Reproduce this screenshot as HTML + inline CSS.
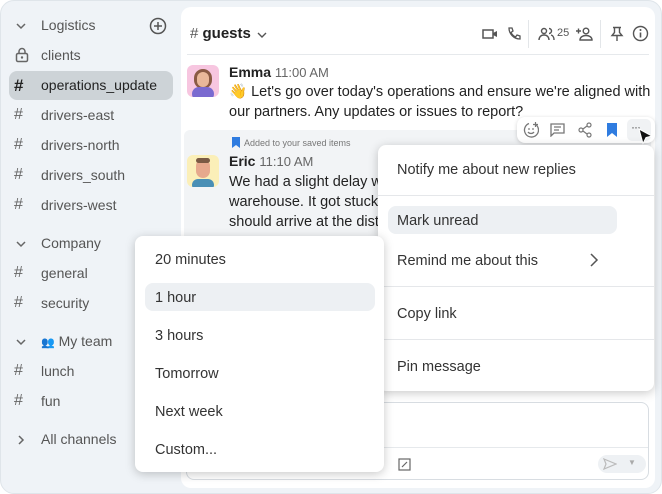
<!DOCTYPE html>
<html><head><meta charset="utf-8"><style>
*{box-sizing:border-box;margin:0;padding:0}
body{width:662px;height:494px;overflow:hidden;font-family:"Liberation Sans",sans-serif;background:#fff;position:relative;color:#222}
.frame{position:absolute;left:0;top:0;width:662px;height:494px;background:#eff3f7;border:1px solid #dfe5ea;border-radius:14px}
.main{position:absolute;left:181px;top:7px;width:474px;height:481px;background:#fff;border-radius:10px}
.abs{position:absolute;white-space:nowrap}
.sb{font-size:14px;color:#555}
.ic{color:#666;font-size:16px}
.menu{position:absolute;background:#fff;border-radius:8px;box-shadow:0 2px 10px rgba(0,0,0,.22)}
.mi{position:absolute;font-size:14.5px;color:#333;white-space:nowrap}
.hl{position:absolute;background:#edf0f3;border-radius:8px}
.div{position:absolute;height:1px;background:#e5e7ea}
</style></head><body>
<div class="frame"></div>
<!-- sidebar -->
<div class="hl" style="left:9px;top:71px;width:164px;height:29px;background:#cdd3d7"></div>
<svg class="abs" style="left:15px;top:20px" width="12" height="12" viewBox="0 0 12 12"><path d="M2 4l4 4 4-4" fill="none" stroke="#666" stroke-width="1.5"/></svg>
<div class="abs sb" style="left:41px;top:17px">Logistics</div>
<svg class="abs" style="left:149px;top:17px" width="18" height="18" viewBox="0 0 18 18"><circle cx="9" cy="9" r="7.5" fill="none" stroke="#555" stroke-width="1.5"/><path d="M9 5v8M5 9h8" stroke="#555" stroke-width="1.5"/></svg>
<svg class="abs" style="left:15px;top:47px" width="14" height="16" viewBox="0 0 14 16"><rect x="1.5" y="6.5" width="11" height="8" rx="1.5" fill="none" stroke="#666" stroke-width="1.5"/><path d="M4 6.5V4.5a3 3 0 016 0v2" fill="none" stroke="#666" stroke-width="1.5"/><circle cx="7" cy="10.5" r="1.2" fill="#666"/></svg>
<div class="abs sb" style="left:41px;top:47px">clients</div>
<div class="abs" style="left:14px;top:76px;font-size:17px;color:#222;font-weight:bold">#</div>
<div class="abs" style="left:41px;top:77px;font-size:14px;color:#222">operations_update</div>
<div class="abs ic" style="left:14px;top:106px">#</div><div class="abs sb" style="left:41px;top:107px">drivers-east</div>
<div class="abs ic" style="left:14px;top:136px">#</div><div class="abs sb" style="left:41px;top:137px">drivers-north</div>
<div class="abs ic" style="left:14px;top:166px">#</div><div class="abs sb" style="left:41px;top:167px">drivers_south</div>
<div class="abs ic" style="left:14px;top:196px">#</div><div class="abs sb" style="left:41px;top:197px">drivers-west</div>
<svg class="abs" style="left:15px;top:238px" width="12" height="12" viewBox="0 0 12 12"><path d="M2 4l4 4 4-4" fill="none" stroke="#666" stroke-width="1.5"/></svg>
<div class="abs sb" style="left:41px;top:235px">Company</div>
<div class="abs ic" style="left:14px;top:264px">#</div><div class="abs sb" style="left:41px;top:265px">general</div>
<div class="abs ic" style="left:14px;top:294px">#</div><div class="abs sb" style="left:41px;top:295px">security</div>
<svg class="abs" style="left:15px;top:336px" width="12" height="12" viewBox="0 0 12 12"><path d="M2 4l4 4 4-4" fill="none" stroke="#666" stroke-width="1.5"/></svg>
<div class="abs sb" style="left:41px;top:333px"><span style="color:#5a7fa8;font-size:11px">👥</span> My team</div>
<div class="abs ic" style="left:14px;top:362px">#</div><div class="abs sb" style="left:41px;top:363px">lunch</div>
<div class="abs ic" style="left:14px;top:392px">#</div><div class="abs sb" style="left:41px;top:393px">fun</div>
<svg class="abs" style="left:15px;top:434px" width="12" height="12" viewBox="0 0 12 12"><path d="M4 2l4 4-4 4" fill="none" stroke="#666" stroke-width="1.5"/></svg>
<div class="abs sb" style="left:41px;top:431px">All channels</div>

<div class="main"></div>
<!-- header -->
<div class="abs" style="left:190px;top:25px;font-size:15px;color:#222"><span style="color:#555">#</span><b> guests</b></div>
<svg class="abs" style="left:256px;top:29px" width="12" height="12" viewBox="0 0 12 12"><path d="M2 4l4 4 4-4" fill="none" stroke="#555" stroke-width="1.4"/></svg>
<svg class="abs" style="left:482px;top:27px" width="16" height="14" viewBox="0 0 16 14"><rect x="1" y="3" width="10" height="8" fill="none" stroke="#555" stroke-width="1.5"/><path d="M11 6l4-2v6l-4-2z" fill="#555"/></svg>
<svg class="abs" style="left:506px;top:26px" width="16" height="16" viewBox="0 0 16 16"><path d="M3 2l3 0 1 3-2 1.5c1 2 2.5 3.5 4.5 4.5L11 9l3 1v3c-6 0-11-5-11-11z" fill="none" stroke="#555" stroke-width="1.3"/></svg>
<div class="abs" style="left:528px;top:20px;width:1px;height:28px;background:#e3e6e9"></div>
<svg class="abs" style="left:538px;top:27px" width="18" height="14" viewBox="0 0 18 14"><circle cx="6" cy="4" r="2.5" fill="none" stroke="#555" stroke-width="1.4"/><path d="M1 13c0-3 2-5 5-5s5 2 5 5" fill="none" stroke="#555" stroke-width="1.4"/><path d="M11 1.5a2.5 2.5 0 010 5M13 8c2 .5 3 2.5 3 5" fill="none" stroke="#555" stroke-width="1.4"/></svg>
<div class="abs" style="left:557px;top:27px;font-size:11px;color:#555">25</div>
<svg class="abs" style="left:575px;top:26px" width="18" height="16" viewBox="0 0 18 16"><path d="M1 5h5M3.5 2.5v5" stroke="#555" stroke-width="1.4"/><circle cx="11" cy="5" r="2.8" fill="none" stroke="#555" stroke-width="1.4"/><path d="M5 14c0-3 3-4.5 6-4.5s6 1.5 6 4.5z" fill="none" stroke="#555" stroke-width="1.4"/></svg>
<div class="abs" style="left:600px;top:20px;width:1px;height:28px;background:#e3e6e9"></div>
<svg class="abs" style="left:610px;top:26px" width="14" height="16" viewBox="0 0 14 16"><path d="M3 1.5h8M4.5 1.5v5L2 9.5h10L9.5 6.5v-5M7 9.5V15" fill="none" stroke="#555" stroke-width="1.4"/></svg>
<svg class="abs" style="left:632px;top:25px" width="17" height="17" viewBox="0 0 17 17"><circle cx="8.5" cy="8.5" r="7" fill="none" stroke="#555" stroke-width="1.4"/><path d="M8.5 7.5v5" stroke="#555" stroke-width="1.6"/><circle cx="8.5" cy="5" r="1" fill="#555"/></svg>
<div class="abs" style="left:187px;top:54px;width:462px;height:1px;background:#e6e9ec"></div>

<!-- Emma -->
<div class="abs" style="left:187px;top:65px;width:32px;height:32px;border-radius:6px;background:#f7c6e0;overflow:hidden"><div style="position:absolute;left:7px;top:4px;width:18px;height:20px;border-radius:9px;background:#8a5a44"></div><div style="position:absolute;left:10px;top:7px;width:12px;height:15px;border-radius:6px;background:#e9b89a"></div><div style="position:absolute;left:5px;top:22px;width:22px;height:14px;border-radius:8px;background:#7a6ad0"></div></div>
<div class="abs" style="left:229px;top:64px;font-size:14px"><b>Emma</b> <span style="color:#666;font-size:13px">11:00 AM</span></div>
<div class="abs" style="left:229px;top:82px;font-size:14.5px;line-height:20px;color:#222">👋 Let's go over today's operations and ensure we're aligned with<br>our partners. Any updates or issues to report?</div>

<!-- Eric -->
<div class="abs" style="left:184px;top:130px;width:467px;height:112px;background:#f2f4f6;border-radius:6px"></div>
<svg class="abs" style="left:232px;top:137px" width="8" height="11" viewBox="0 0 8 11"><path d="M0 0h8v11L4 8 0 11z" fill="#2f7ce0"/></svg>
<div class="abs" style="left:244px;top:138px;font-size:9px;color:#777">Added to your saved items</div>
<div class="abs" style="left:187px;top:155px;width:32px;height:32px;border-radius:6px;background:#fbefb8;overflow:hidden"><div style="position:absolute;left:9px;top:4px;width:14px;height:19px;border-radius:7px;background:#e6a98d"></div><div style="position:absolute;left:9px;top:3px;width:14px;height:5px;border-radius:4px;background:#7a5a44"></div><div style="position:absolute;left:5px;top:24px;width:22px;height:12px;border-radius:6px;background:#4a8fb5"></div></div>
<div class="abs" style="left:229px;top:153px;font-size:14px"><b>Eric</b> <span style="color:#666;font-size:13px">11:10 AM</span></div>
<div class="abs" style="left:229px;top:172px;font-size:14.5px;line-height:20px;color:#222">We had a slight delay wi<br>warehouse. It got stuck<br>should arrive at the distr</div>
<div class="abs" style="left:621px;top:172px;font-size:14.5px;color:#222">rth</div>
<div class="abs" style="left:624px;top:342px;font-size:14.5px;color:#222">ifts</div>

<!-- toolbar -->
<div class="abs" style="left:517px;top:117px;width:138px;height:26px;background:#fff;border-radius:8px;box-shadow:0 1px 4px rgba(0,0,0,.18)"></div>
<svg class="abs" style="left:523px;top:122px" width="16" height="16" viewBox="0 0 16 16"><path d="M12 2a7 7 0 11-6-.5" fill="none" stroke="#777" stroke-width="1.3"/><circle cx="6" cy="7" r=".9" fill="#777"/><circle cx="10" cy="7" r=".9" fill="#777"/><path d="M5 10c1.5 2 4.5 2 6 0" fill="none" stroke="#777" stroke-width="1.3"/><path d="M12.5 0v5M10 2.5h5" stroke="#777" stroke-width="1.2"/></svg>
<svg class="abs" style="left:550px;top:123px" width="15" height="14" viewBox="0 0 15 14"><path d="M1 1h13v9H4l-3 3z" fill="none" stroke="#777" stroke-width="1.3"/><path d="M4 4h7M4 7h5" stroke="#777" stroke-width="1.2"/></svg>
<svg class="abs" style="left:578px;top:122px" width="14" height="16" viewBox="0 0 14 16"><circle cx="11" cy="3" r="2" fill="none" stroke="#777" stroke-width="1.2"/><circle cx="3" cy="8" r="2" fill="none" stroke="#777" stroke-width="1.2"/><circle cx="11" cy="13" r="2" fill="none" stroke="#777" stroke-width="1.2"/><path d="M5 7l4-3M5 9l4 3" stroke="#777" stroke-width="1.2"/></svg>
<svg class="abs" style="left:607px;top:123px" width="10" height="14" viewBox="0 0 10 14"><path d="M0 0h10v14L5 10 0 14z" fill="#2f7ce0"/></svg>
<div class="abs" style="left:627px;top:119px;width:24px;height:22px;background:#f0f2f4;border-radius:5px"></div>
<div class="abs" style="left:631px;top:120px;font-size:12px;color:#555;letter-spacing:-1px">···</div>
<svg class="abs" style="left:638px;top:128px" width="16" height="20" viewBox="0 0 16 20"><path d="M1 1l13 7-6 1.5-3 6z" fill="#111" stroke="#fff" stroke-width="1"/></svg>

<!-- composer -->
<div class="abs" style="left:186px;top:402px;width:463px;height:78px;border:1px solid #d8dde2;border-radius:8px;background:#fff"></div>
<div class="abs" style="left:187px;top:447px;width:461px;height:1px;background:#e6e9ec"></div>
<svg class="abs" style="left:398px;top:458px" width="13" height="13" viewBox="0 0 13 13"><rect x="1" y="1" width="11" height="11" fill="none" stroke="#666" stroke-width="1.2"/><path d="M4 9l5-5" stroke="#666" stroke-width="1.2"/></svg>
<div class="abs" style="left:598px;top:455px;width:48px;height:18px;background:#eef1f4;border-radius:9px"></div>
<svg class="abs" style="left:603px;top:458px" width="14" height="12" viewBox="0 0 14 12"><path d="M1 1l12 5-12 5 2-5z" fill="none" stroke="#bbb" stroke-width="1.2"/></svg>
<div class="abs" style="left:628px;top:458px;font-size:8px;color:#aaa">▼</div>

<!-- context menu -->
<div class="menu" style="left:378px;top:145px;width:276px;height:246px"></div>
<div class="mi" style="left:397px;top:162px">Notify me about new replies</div>
<div class="div" style="left:378px;top:195px;width:276px"></div>
<div class="hl" style="left:388px;top:206px;width:229px;height:28px"></div>
<div class="mi" style="left:397px;top:213px">Mark unread</div>
<div class="mi" style="left:397px;top:253px">Remind me about this</div>
<svg class="abs" style="left:589px;top:253px" width="10" height="14" viewBox="0 0 10 14"><path d="M2 1l6 6-6 6" fill="none" stroke="#555" stroke-width="1.5"/></svg>
<div class="div" style="left:378px;top:286px;width:276px"></div>
<div class="mi" style="left:397px;top:306px">Copy link</div>
<div class="div" style="left:378px;top:339px;width:276px"></div>
<div class="mi" style="left:397px;top:359px">Pin message</div>

<!-- submenu -->
<div class="menu" style="left:135px;top:236px;width:249px;height:236px"></div>
<div class="mi" style="left:155px;top:252px">20 minutes</div>
<div class="hl" style="left:145px;top:283px;width:230px;height:28px"></div>
<div class="mi" style="left:155px;top:290px">1 hour</div>
<div class="mi" style="left:155px;top:328px">3 hours</div>
<div class="mi" style="left:155px;top:366px">Tomorrow</div>
<div class="mi" style="left:155px;top:404px">Next week</div>
<div class="mi" style="left:155px;top:442px">Custom...</div>
</body></html>
